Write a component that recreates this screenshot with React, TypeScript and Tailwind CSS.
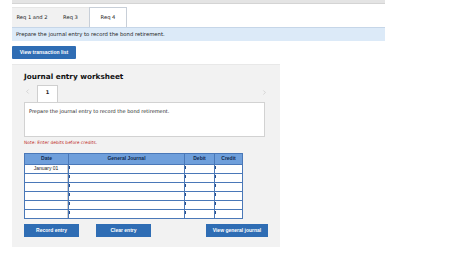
import { ChevronLeft, ChevronRight } from 'lucide-react';

const rows = ['January 01', '', '', '', '', ''];

function Cell({ w }: { w: string }) {
    return (
        <div className={`${w} h-full border-l border-[#4a78b8] relative bg-white`}>
            <div className="absolute left-0 top-[1px] w-[1px] h-[3px] bg-[#2a4f8a]" />
        </div>
    );
}

export default function App() {
    return (
        <div className="w-[474px] h-[258px] bg-white pl-[12px] font-['DejaVu_Sans',sans-serif] text-[#222] overflow-hidden">
            <div className="w-[373px] h-[4px] bg-[#e4e4e4] border-b border-[#d4d4d4]" />

            {/* Tabs */}
            <div className="flex mt-[3px] h-[20px] text-[5.2px] w-[373px]">
                <div className="w-[40px] flex items-center justify-center bg-[#f1f1f1] border-t border-[#e6e6e6]">Req 1 and 2</div>
                <div className="w-[37px] flex items-center justify-center bg-[#f1f1f1] border-t border-[#e6e6e6]">Req 3</div>
                <div className="w-[38px] flex items-center justify-center bg-white border border-b-0 border-[#c8cfd8]">Req 4</div>
            </div>
            <div className="w-[373px] h-[14px] bg-[#dceaf8] border-t border-[#c6d6e8] flex items-center pl-[4px] text-[5.3px] text-[#1e1e1e]">
                Prepare the journal entry to record the bond retirement.
            </div>

            <div className="mt-[5px] w-[64px] h-[13px] bg-[#2f6db4] rounded-[1px] flex items-center justify-center text-white text-[5px] font-bold font-['Liberation_Sans',sans-serif]">
                View transaction list
            </div>

            {/* Worksheet */}
            <div className="mt-[5px] w-[268px] h-[183px] bg-[#f2f2f2] pl-[12px] pt-[8px] border-t border-[#e8e8e8]">
                <div className="text-[7.3px] font-bold text-[#111] leading-none">Journal entry worksheet</div>

                <div className="flex items-end mt-[5px] w-[242px] relative h-[17px]">
                    <ChevronLeft className="absolute left-0 top-[3px] w-[7px] h-[7px] text-[#b0b0b0]" strokeWidth={1.5} />
                    <div className="ml-[13px] w-[21px] h-[17px] bg-white border border-b-0 border-[#cfcfcf] flex items-start justify-center pt-[3px] text-[5px] font-bold">1</div>
                    <ChevronRight className="absolute right-[-2px] top-[4px] w-[7px] h-[7px] text-[#b0b0b0]" strokeWidth={1.5} />
                </div>
                <div className="w-[241px] h-[35px] bg-white border border-[#d2d2d2] pl-[4px] pt-[5px] text-[5px] text-[#222]">
                    Prepare the journal entry to record the bond retirement.
                </div>

                <div className="mt-[3px] text-[4.4px] text-[#c0302a]">Note: Enter debits before credits.</div>

                {/* Table */}
                <div className="mt-[6px] w-[219px] border border-[#4a78b8] font-['Liberation_Sans',sans-serif]">
                    <div className="flex h-[10px] bg-[#6f9fdb] text-[#102a50] text-[5px] font-bold">
                        <div className="w-[43px] flex items-center justify-center">Date</div>
                        <div className="w-[116px] flex items-center justify-center border-l border-[#4a78b8]">General Journal</div>
                        <div className="w-[30px] flex items-center justify-center border-l border-[#4a78b8]">Debit</div>
                        <div className="flex-1 flex items-center justify-center border-l border-[#4a78b8]">Credit</div>
                    </div>
                    {rows.map((d, i) => (
                        <div key={i} className="flex h-[9px] border-t border-[#4a78b8] bg-white">
                            <div className="w-[43px] h-full flex items-center justify-center text-[5px] text-[#222] border-r border-[#cfcfcf]">{d}</div>
                            <Cell w="w-[116px]" />
                            <Cell w="w-[30px]" />
                            <Cell w="flex-1" />
                        </div>
                    ))}
                </div>

                {/* Buttons */}
                <div className="flex mt-[5px] w-[244px] text-white text-[5px] font-bold font-['Liberation_Sans',sans-serif]">
                    <div className="w-[55px] h-[13px] bg-[#2f6db4] flex items-center justify-center">Record entry</div>
                    <div className="ml-[17px] w-[55px] h-[13px] bg-[#2f6db4] flex items-center justify-center">Clear entry</div>
                    <div className="ml-auto w-[62px] h-[13px] bg-[#2f6db4] flex items-center justify-center">View general journal</div>
                </div>
            </div>
        </div>
    );
}
